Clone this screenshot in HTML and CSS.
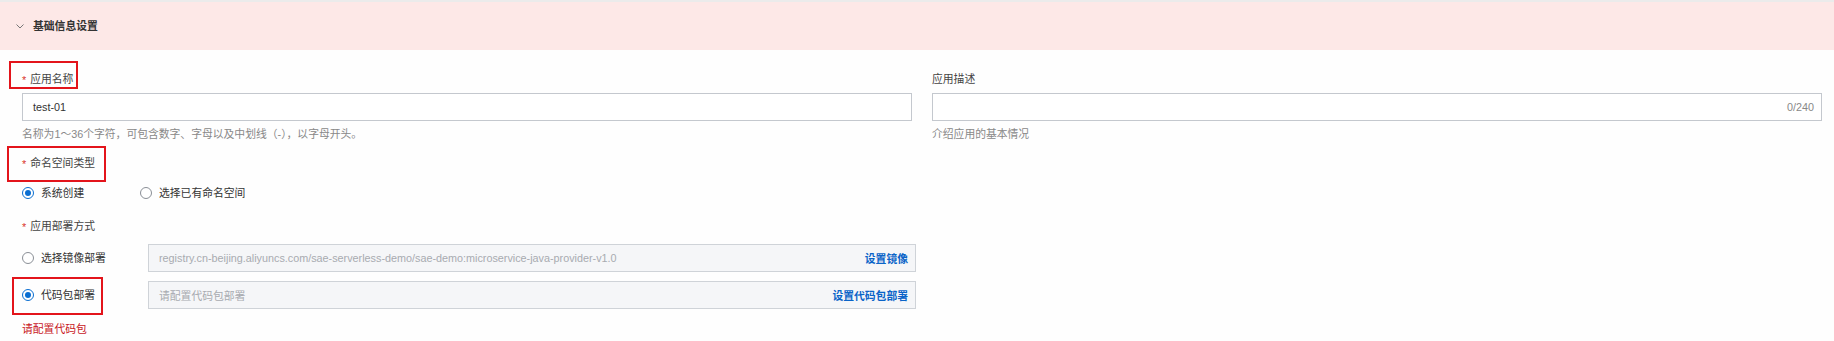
FILE: index.html
```html
<!DOCTYPE html>
<html lang="zh-CN">
<head>
<meta charset="utf-8">
<title>基础信息设置</title>
<link rel="stylesheet" href="styles.css">
</head>
<body>
<div class="page">
  <div class="section-head">
    <svg class="chevron" width="8" height="5" viewBox="0 0 8 5"><path d="M0.5 0.5 L4 4 L7.5 0.5" fill="none" stroke="#777" stroke-width="1"/></svg>
    <span class="section-title">基础信息设置</span>
  </div>
  <div class="section-body">
    <div class="two-col">
      <div class="field">
        <div class="label"><span class="req">*</span>应用名称</div>
        <div class="input"><span class="input-text">test-01</span></div>
        <div class="hint">名称为1～36个字符，可包含数字、字母以及中划线（-），以字母开头。</div>
      </div>
      <div class="field">
        <div class="label">应用描述</div>
        <div class="input input-count"><span class="counter">0/240</span></div>
        <div class="hint">介绍应用的基本情况</div>
      </div>
    </div>

    <div class="label label-gap"><span class="req">*</span>命名空间类型</div>
    <div class="radio-group">
      <label class="radio-item"><span class="radio checked"></span><span>系统创建</span></label>
      <label class="radio-item"><span class="radio"></span><span>选择已有命名空间</span></label>
    </div>

    <div class="label label-gap3"><span class="req">*</span>应用部署方式</div>
    <div class="deploy-row first">
      <label class="radio-item deploy-label"><span class="radio"></span><span>选择镜像部署</span></label>
      <div class="box">
        <span class="placeholder">registry.cn-beijing.aliyuncs.com/sae-serverless-demo/sae-demo:microservice-java-provider-v1.0</span>
        <span class="link">设置镜像</span>
      </div>
    </div>
    <div class="deploy-row second">
      <label class="radio-item deploy-label"><span class="radio checked"></span><span>代码包部署</span></label>
      <div class="box">
        <span class="placeholder">请配置代码包部署</span>
        <span class="link">设置代码包部署</span>
      </div>
    </div>
    <div class="error">请配置代码包</div>
  </div>

  <div class="mark mark-1"></div>
  <div class="mark mark-2"></div>
  <div class="mark mark-3"></div>
</div>
</body>
</html>
```

FILE: styles.css
```css
* { box-sizing: border-box; }
html, body {
  margin: 0;
  padding: 0;
  background: #fefefe;
}
body {
  font-family: "Liberation Sans", "Noto Sans CJK SC", sans-serif;
  font-size: 10.8px;
  color: #333;
}
.page {
  position: relative;
  width: 1834px;
  height: 341px;
  border-top: 2px solid #ebebeb;
  overflow: hidden;
}
.section-head {
  height: 48px;
  background: #fde8e7;
  display: flex;
  align-items: center;
  padding-left: 16px;
}
.chevron { display: block; margin-right: 9px; margin-top: 1px; }
.section-title {
  font-weight: bold;
  color: #333;
  line-height: 16px;
}
.section-body {
  padding: 0 12px 0 22px;
}
.two-col {
  display: grid;
  grid-template-columns: 890px 890px;
  column-gap: 20px;
}
.field { display: flex; flex-direction: column; }
.label {
  line-height: 16px;
  height: 16px;
  color: #444;
  margin-top: 21px;
}
.req {
  color: #d9342b;
  margin-right: 4px;
  position: relative;
  top: 1px;
}
.input {
  margin-top: 6px;
  height: 28px;
  border: 1px solid #c4c8ce;
  background: #fff;
  display: flex;
  align-items: center;
  padding: 0 10px;
}
.input-text { color: #333; }
.input-count { justify-content: flex-end; padding-right: 7px; }
.counter { color: #888; }
.hint {
  margin-top: 5px;
  line-height: 16px;
  color: #888;
}
.label-gap { margin-top: 13px; }
.label-gap3 { margin-top: 17px; }
.radio-group {
  margin-top: 14px;
  display: flex;
  height: 16px;
  align-items: center;
}
.radio-item {
  display: flex;
  align-items: center;
  gap: 7px;
  line-height: 16px;
  color: #333;
}
.radio-group .radio-item:first-child { width: 118px; }
.radio {
  width: 12px;
  height: 12px;
  border-radius: 50%;
  border: 1px solid #8a8f96;
  background: #fff;
  position: relative;
  flex: none;
}
.radio.checked { border-color: #0a6ed1; }
.radio.checked::after {
  content: "";
  position: absolute;
  left: 2px;
  top: 2px;
  width: 6px;
  height: 6px;
  border-radius: 50%;
  background: #0a6ed1;
}
.deploy-row {
  display: flex;
  align-items: center;
}
.deploy-row.first { margin-top: 10px; }
.deploy-row.second { margin-top: 9px; }
.deploy-label { width: 126px; flex: none; }
.box {
  width: 768px;
  height: 28px;
  border: 1px solid #cfd3d8;
  background: #f5f6f8;
  display: flex;
  align-items: center;
  justify-content: space-between;
  padding: 0 7px 0 10px;
}
.placeholder { color: #a8abb0; }
.link { color: #0a64c8; font-weight: bold; }
.error {
  margin-top: 12px;
  line-height: 16px;
  color: #c8161d;
}
.mark {
  position: absolute;
  border: 2px solid #e3141b;
}
.mark-1 { left: 9px; top: 59px; width: 69px; height: 28px; }
.mark-2 { left: 7px; top: 144px; width: 99px; height: 36px; }
.mark-3 { left: 12px; top: 275px; width: 91px; height: 38px; }
```
